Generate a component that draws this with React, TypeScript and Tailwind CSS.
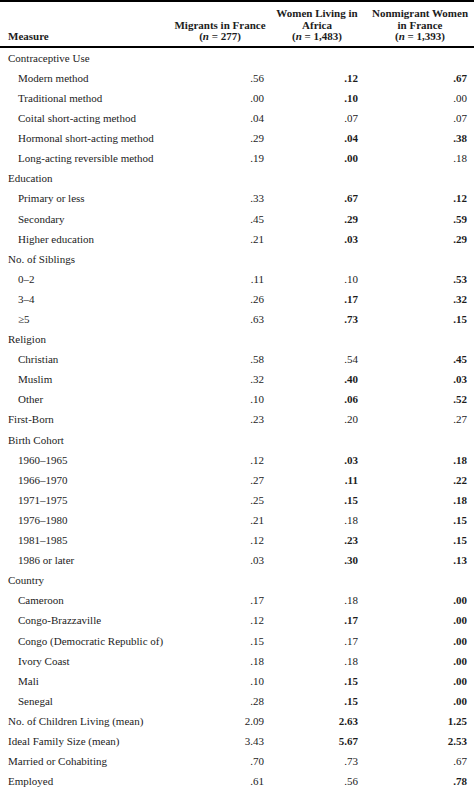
import React from "react";

type Row = {label: string; sub?: boolean; v?: [string, string, string]; b?: [boolean, boolean, boolean]};

const rows: Row[] = [
	{label: "Contraceptive Use"},
	{label: "Modern method", sub: true, v: [".56", ".12", ".67"], b: [false, true, true]},
	{label: "Traditional method", sub: true, v: [".00", ".10", ".00"], b: [false, true, false]},
	{label: "Coital short-acting method", sub: true, v: [".04", ".07", ".07"], b: [false, false, false]},
	{label: "Hormonal short-acting method", sub: true, v: [".29", ".04", ".38"], b: [false, true, true]},
	{label: "Long-acting reversible method", sub: true, v: [".19", ".00", ".18"], b: [false, true, false]},
	{label: "Education"},
	{label: "Primary or less", sub: true, v: [".33", ".67", ".12"], b: [false, true, true]},
	{label: "Secondary", sub: true, v: [".45", ".29", ".59"], b: [false, true, true]},
	{label: "Higher education", sub: true, v: [".21", ".03", ".29"], b: [false, true, true]},
	{label: "No. of Siblings"},
	{label: "0–2", sub: true, v: [".11", ".10", ".53"], b: [false, false, true]},
	{label: "3–4", sub: true, v: [".26", ".17", ".32"], b: [false, true, true]},
	{label: "≥5", sub: true, v: [".63", ".73", ".15"], b: [false, true, true]},
	{label: "Religion"},
	{label: "Christian", sub: true, v: [".58", ".54", ".45"], b: [false, false, true]},
	{label: "Muslim", sub: true, v: [".32", ".40", ".03"], b: [false, true, true]},
	{label: "Other", sub: true, v: [".10", ".06", ".52"], b: [false, true, true]},
	{label: "First-Born", v: [".23", ".20", ".27"], b: [false, false, false]},
	{label: "Birth Cohort"},
	{label: "1960–1965", sub: true, v: [".12", ".03", ".18"], b: [false, true, true]},
	{label: "1966–1970", sub: true, v: [".27", ".11", ".22"], b: [false, true, true]},
	{label: "1971–1975", sub: true, v: [".25", ".15", ".18"], b: [false, true, true]},
	{label: "1976–1980", sub: true, v: [".21", ".18", ".15"], b: [false, false, true]},
	{label: "1981–1985", sub: true, v: [".12", ".23", ".15"], b: [false, true, true]},
	{label: "1986 or later", sub: true, v: [".03", ".30", ".13"], b: [false, true, true]},
	{label: "Country"},
	{label: "Cameroon", sub: true, v: [".17", ".18", ".00"], b: [false, false, true]},
	{label: "Congo-Brazzaville", sub: true, v: [".12", ".17", ".00"], b: [false, true, true]},
	{label: "Congo (Democratic Republic of)", sub: true, v: [".15", ".17", ".00"], b: [false, false, true]},
	{label: "Ivory Coast", sub: true, v: [".18", ".18", ".00"], b: [false, false, true]},
	{label: "Mali", sub: true, v: [".10", ".15", ".00"], b: [false, true, true]},
	{label: "Senegal", sub: true, v: [".28", ".15", ".00"], b: [false, true, true]},
	{label: "No. of Children Living (mean)", v: ["2.09", "2.63", "1.25"], b: [false, true, true]},
	{label: "Ideal Family Size (mean)", v: ["3.43", "5.67", "2.53"], b: [false, true, true]},
	{label: "Married or Cohabiting", v: [".70", ".73", ".67"], b: [false, false, false]},
	{label: "Employed", v: [".61", ".56", ".78"], b: [false, false, true]},
];

const cellW = ["w-[88px]", "w-[82px] ml-[12px]", "w-[94px] ml-[15px]"];

export default function App() {
	return (
		<div className="w-[474px] bg-white text-[#1c1c1c] text-[11px] leading-[11.5px]" style={{fontFamily: '"Liberation Serif", "Times New Roman", serif'}}>
			<div className="border-t-2 border-b-2 border-black flex items-end pt-[6px] pb-[3px] pr-[7px] font-bold whitespace-nowrap">
				<div className="flex-1 pl-[8px]">Measure</div>
				<div className={`${cellW[0]} flex flex-col items-center`}>
					<div>Migrants in France</div>
					<div>
						(<i>n</i> = 277)
					</div>
				</div>
				<div className={`${cellW[1]} flex flex-col items-center`}>
					<div>Women Living in</div>
					<div>Africa</div>
					<div>
						(<i>n</i> = 1,483)
					</div>
				</div>
				<div className={`${cellW[2]} flex flex-col items-center`}>
					<div>Nonmigrant Women</div>
					<div>in France</div>
					<div>
						(<i>n</i> = 1,393)
					</div>
				</div>
			</div>
			<div className="pt-[1px]">
				{rows.map((r, i) => (
					<div key={i} className="flex items-center h-[20.1px] pr-[7px] whitespace-nowrap">
						<div className={`flex-1 ${r.sub ? "pl-[18px]" : "pl-[8px]"}`}>{r.label}</div>
						{r.v &&
							r.v.map((v, j) => (
								<div key={j} className={`${cellW[j]} text-right ${r.b && r.b[j] ? "font-bold" : ""}`}>
									{v}
								</div>
							))}
					</div>
				))}
			</div>
		</div>
	);
}
